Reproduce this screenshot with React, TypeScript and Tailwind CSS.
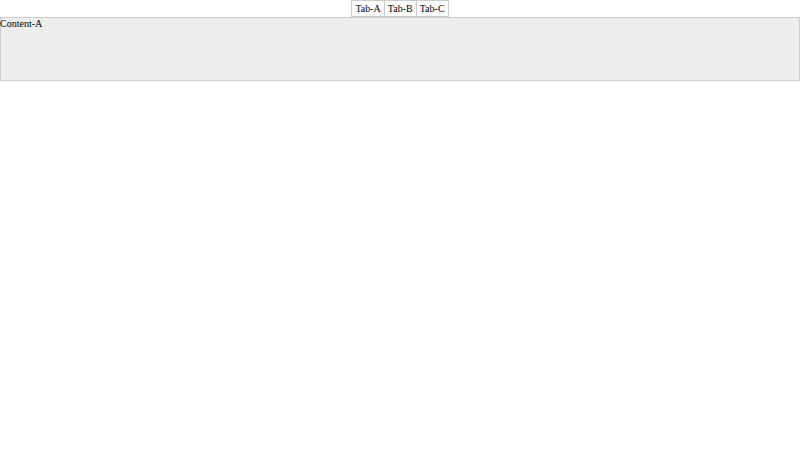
export default function App() {
  return (
    <div className="w-[800px] font-['Liberation_Serif',serif] text-[10px] text-black">
      <div className="flex justify-center">
        <div className="flex">
          {['Tab-A', 'Tab-B', 'Tab-C'].map((t) => (
            <div key={t} className="border border-[#cccccc] -ml-px first:ml-0 px-[3px] py-[2px] leading-[11px] bg-white">
              {t}
            </div>
          ))}
        </div>
      </div>
      <div className="h-[64px] border border-[#cccccc] bg-[#eeeeee] leading-[11px]">
        <span className="-ml-px">Content-A</span>
      </div>
    </div>
  );
}
